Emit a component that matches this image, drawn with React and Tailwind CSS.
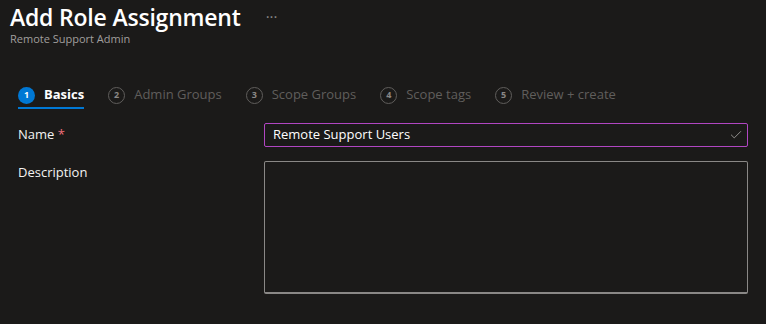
import { Check } from "lucide-react";

const steps = [
  { n: 1, label: "Basics", active: true },
  { n: 2, label: "Admin Groups" },
  { n: 3, label: "Scope Groups" },
  { n: 4, label: "Scope tags" },
  { n: 5, label: "Review + create" },
];

function Step({ n, label, active }) {
  return (
    <div
      className={
        "flex items-center gap-[9px] h-[26px] border-b-2 " +
        (active ? "border-[#0078d4]" : "border-transparent")
      }
    >
      {active ? (
        <span className="flex items-center justify-center w-[17px] h-[17px] rounded-full bg-[#0078d4] text-white text-[9px] font-bold">
          {n}
        </span>
      ) : (
        <span className="flex items-center justify-center w-[17px] h-[17px] rounded-full border border-[#605e5c] text-[#8a8886] text-[9px] font-bold">
          {n}
        </span>
      )}
      <span
        className={
          active
            ? "text-[13px] font-bold text-white"
            : "text-[13px] text-[#605e5c]"
        }
      >
        {label}
      </span>
    </div>
  );
}

export default function App() {
  return (
    <div
      className="w-[766px] h-[324px] bg-[#1b1a19] text-[#f3f2f1] overflow-hidden"
      style={{ fontFamily: '"Open Sans", "Noto Sans", sans-serif' }}
    >
      <div className="px-[10px] pt-[1px]">
        <div className="flex items-center h-[31px]">
          <h1 className="text-[23px] leading-[28px] font-semibold text-white tracking-[-0.2px]">
            Add Role Assignment
          </h1>
          <span className="ml-[25px] text-[#8a8886] text-[15px] leading-none">
            ···
          </span>
        </div>
        <p className="text-[11px] leading-[14px] text-[#a19f9d]">
          Remote Support Admin
        </p>
      </div>

      <div className="flex items-center gap-[24px] pl-[18px] mt-[37px]">
        {steps.map((s) => (
          <Step key={s.n} {...s} />
        ))}
      </div>

      <div className="pl-[18px] pr-[18px] mt-[14px]">
        <div className="flex items-center">
          <label className="w-[246px] text-[13px] text-[#f3f2f1]">
            Name <span className="text-[#f1707b]">*</span>
          </label>
          <div className="flex-1 flex items-center h-[24px] border border-[#b146c2] rounded-[2px] pl-[8px] pr-[4px]">
            <span className="flex-1 text-[13px] text-white">
              Remote Support Users
            </span>
            <Check size={14} strokeWidth={1.5} className="text-[#a19f9d]" />
          </div>
        </div>

        <div className="flex items-start mt-[14px]">
          <label className="w-[246px] text-[13px] text-[#f3f2f1] pt-[2px]">
            Description
          </label>
          <div className="flex-1 h-[133px] border border-[#8a8886] border-b-2 rounded-[2px]" />
        </div>
      </div>
    </div>
  );
}
